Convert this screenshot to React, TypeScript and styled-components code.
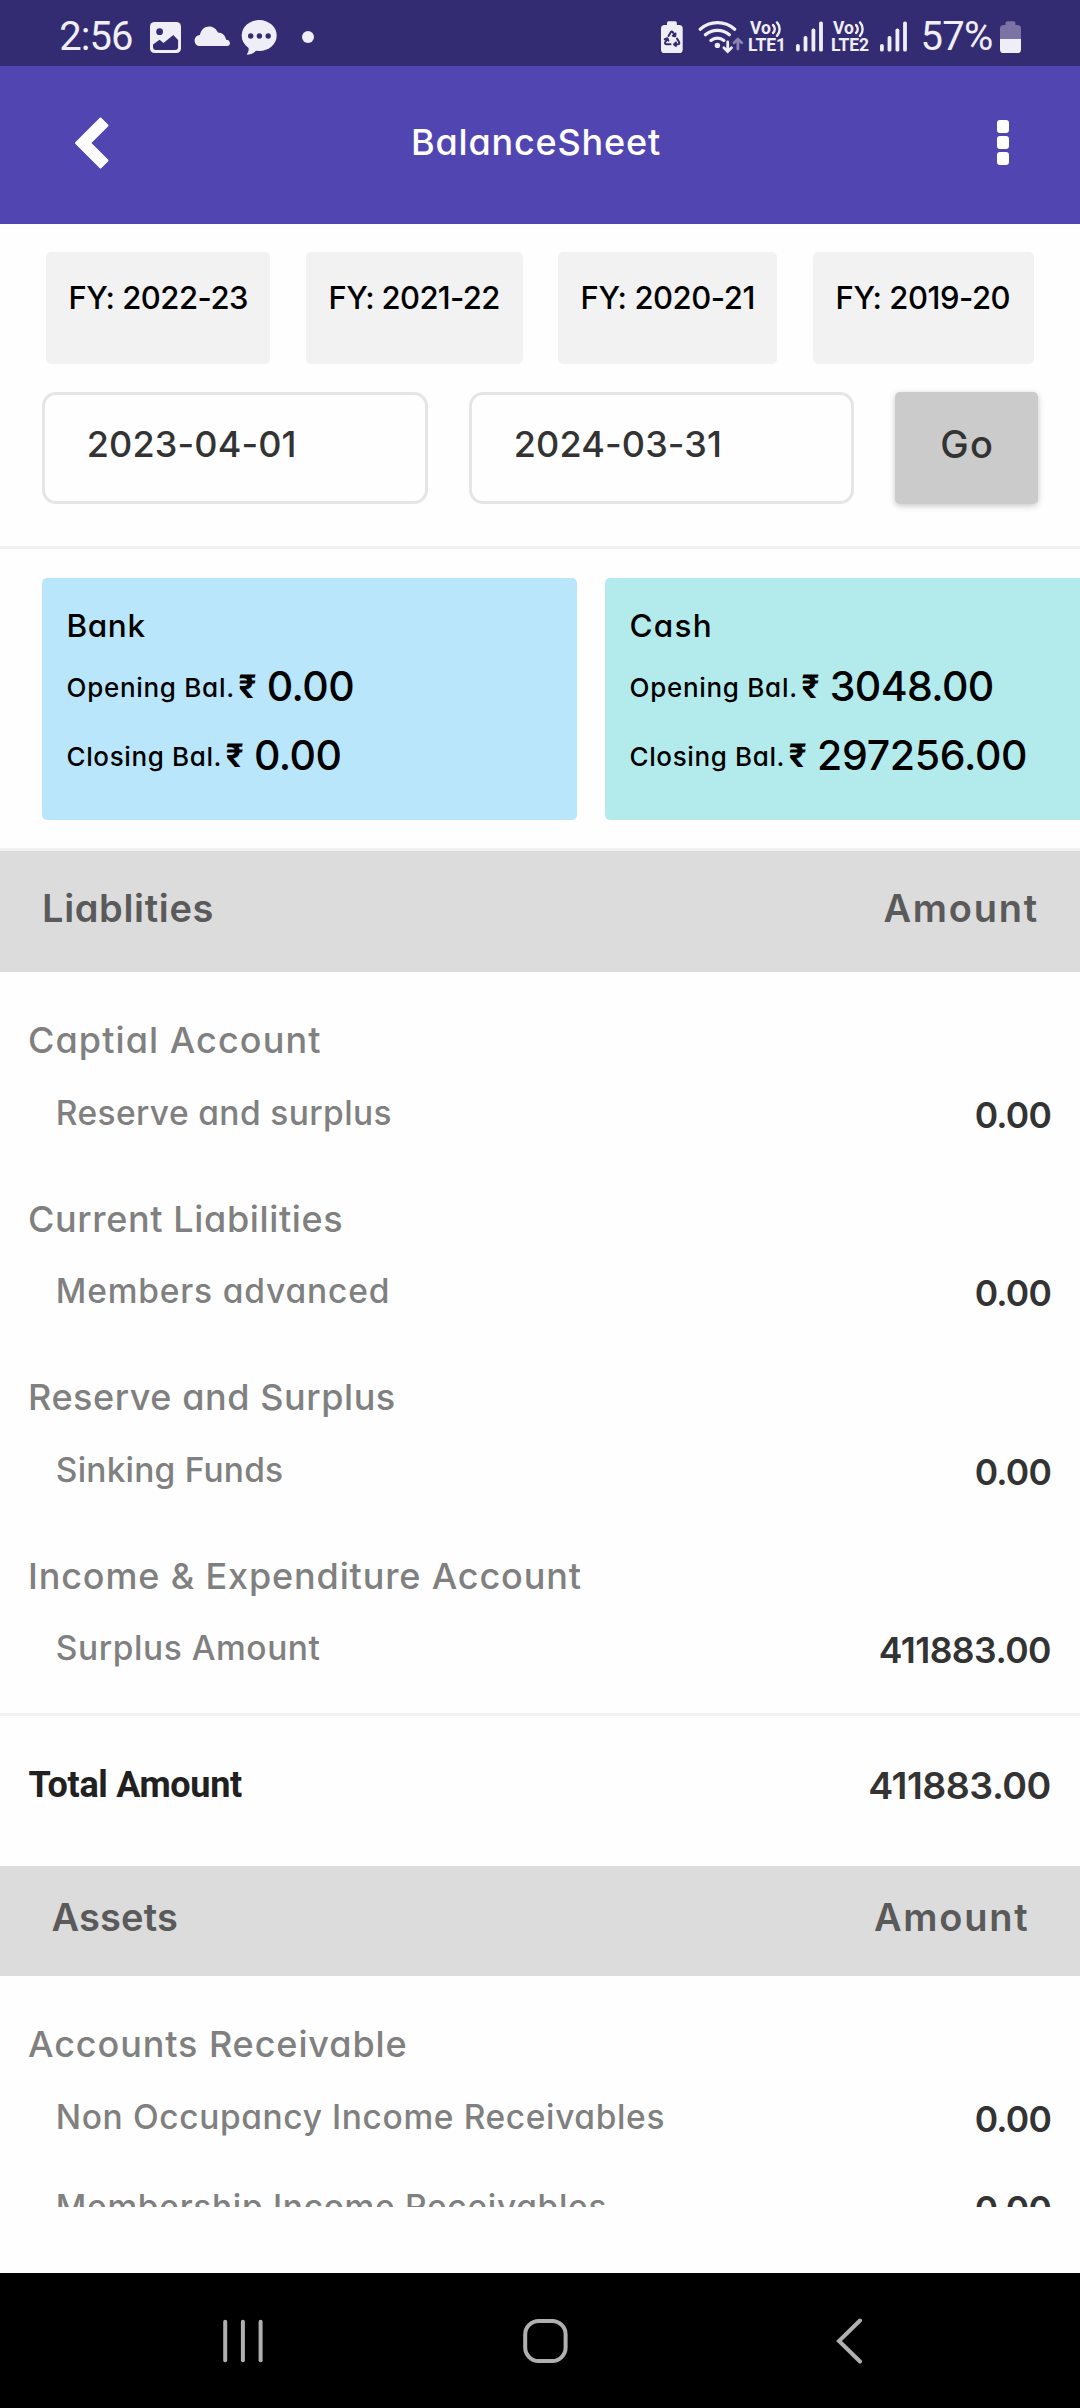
import React from "react";
import styled, { createGlobalStyle } from "styled-components";

const GlobalStyle = createGlobalStyle`
  * { box-sizing: border-box; }
  body {
    margin: 0;
    background: #fefefe;
    font-family: Inter, "Noto Sans", sans-serif;
    font-feature-settings: "cv11" 1;
  }
`;

const Screen = styled.div`
  width: 1080px;
  height: 2408px;
  display: flex;
  flex-direction: column;
  overflow: hidden;
`;

interface LabelProps {
  $size: number;
  $track?: number;
  $weight?: number;
  $color?: string;
}

const Label = styled.span<LabelProps>`
  display: block;
  white-space: nowrap;
  line-height: 44px;
  font-size: ${(p) => p.$size}px;
  letter-spacing: ${(p) => p.$track ?? 0}px;
  font-weight: ${(p) => p.$weight ?? 500};
  color: ${(p) => p.$color ?? "#000"};
`;

/* ---------- status bar ---------- */

const INK = "#efeef6";
const STATUS_BG = "#342c72";

const StatusBar = styled.div`
  flex: none;
  height: 66px;
  display: flex;
  justify-content: space-between;
  padding: 0 59px 0 59.3px;
  background: ${STATUS_BG};
  color: ${INK};
  font-family: Roboto, sans-serif;
`;

const StatusGroup = styled.div`
  display: flex;
`;

const StatusText = styled.span<{ $track: number; $width: number; $ml?: number }>`
  width: ${(p) => p.$width}px;
  margin-left: ${(p) => p.$ml ?? 0}px;
  white-space: nowrap;
  font-size: 40px;
  line-height: 74px;
  height: 66px;
  letter-spacing: ${(p) => p.$track}px;
`;

const Glyph = styled.svg<{ $ml?: number }>`
  display: block;
  flex: none;
  margin-left: ${(p) => p.$ml ?? 0}px;
`;

const Volte = styled.div<{ $ml: number; $w: number }>`
  width: ${(p) => p.$w}px;
  margin-left: ${(p) => p.$ml}px;
  padding-top: 20px;
  font-size: 17.5px;
  font-weight: 700;
  line-height: 17px;
  letter-spacing: -0.1px;
  white-space: nowrap;
`;

const VolteTop = styled.div`
  display: flex;
  padding-left: 2px;
  height: 17px;
`;

const VolteMark = ({ ml, w, slot }: { ml: number; w: number; slot: number }) => (
  <Volte $ml={ml} $w={w}>
    <VolteTop>
      Vo
      <Glyph $ml={0.5} width="12" height="17" viewBox="0 0 12 17" fill="none" stroke={INK} strokeWidth="2.4" strokeLinecap="round">
        <path d="M2 5a5.4 5.4 0 0 1 0 8" />
        <path d="M6 2.400a10 10 0 0 1 0 13.500" />
      </Glyph>
    </VolteTop>
    <div>LTE{slot}</div>
  </Volte>
);

const Signal = ({ ml }: { ml: number }) => (
  <Glyph $ml={ml} width="27" height="66" viewBox="0 0 27 66" fill={INK}>
    <rect x="0" y="44" width="3.8" height="7.6" rx="1.9" />
    <rect x="7.6" y="36" width="3.8" height="15.6" rx="1.7" />
    <rect x="15.5" y="28.6" width="3.8" height="23" rx="1.7" />
    <rect x="23.1" y="21.6" width="3.8" height="30" rx="1.7" />
  </Glyph>
);

const PictureIcon = () => (
  <Glyph $ml={17.7} width="31" height="66" viewBox="150 0 31 66">
    <rect x="150" y="22" width="31" height="31" rx="4.6" fill={INK} />
    <circle cx="159.6" cy="31.7" r="3.4" fill={STATUS_BG} />
    <path
      d="M153 44.5l6.6-4.8 3.9 3.2 9.8-7.8 4.8 4.9v7a3 3 0 0 1-3 3H156a3 3 0 0 1-3-3z"
      fill={STATUS_BG}
    />
  </Glyph>
);

const CloudIcon = () => (
  <Glyph $ml={13} width="36" height="66" viewBox="194 0 36 66" fill={INK}>
    <path d="M199.6 46a5 5 0 0 1-5-5.200c0-3.200 2.300-5.500 5.300-5.700C200.900 29.800 204.600 26.400 209.200 26.400c4 0 7.200 2.400 8.700 6.200 4.400.2 7.400 3 8.200 7.100 2.300.2 3.900 1.600 3.900 3.500 0 1.600-1.200 2.800-2.900 2.800z" />
  </Glyph>
);

const ChatIcon = () => (
  <Glyph $ml={11} width="36" height="66" viewBox="241 0 36 66">
    <ellipse cx="259.2" cy="35.5" rx="17.5" ry="15.5" fill={INK} />
    <path d="M248.5 46c1.2 3 .8 5.5-1.1 8.2 4-.3 7.5-2 9.6-5z" fill={INK} stroke={INK} strokeLinejoin="round" />
    <g fill={STATUS_BG}>
      <circle cx="250.7" cy="36" r="2.7" />
      <circle cx="259.4" cy="36" r="2.7" />
      <circle cx="268.2" cy="36" r="2.7" />
    </g>
  </Glyph>
);

const RecycleBattery = () => (
  <Glyph width="22" height="66" viewBox="661 0 22 66">
    <rect x="667" y="21.3" width="9.8" height="6" rx="1.5" fill={INK} />
    <rect x="661" y="25" width="21.7" height="28" rx="3.6" fill={INK} />
    <g fill="none" stroke={STATUS_BG} strokeWidth="2" strokeLinecap="round" strokeLinejoin="round">
      <path d="M668.5 36l2.300-3.800q1-1.400 2 0l2.300 3.800M675.5 33.500l-.3 2.700-2.500-.5" />
      <path d="M677 38.500l2.200 3.800q.6 2-1.300 2h-3.700M676 42.400l-2 2 2 1.500" />
      <path d="M670.5 44.300h-4q-2-.1-1.300-2l2.200-3.800M664.800 39.300l2.600-1 1 2.400" />
    </g>
  </Glyph>
);

const WifiIcon = () => (
  <Glyph $ml={15.5} width="46" height="66" viewBox="698.3 0 46 66" fill="none" strokeLinecap="round" strokeWidth="3.2">
    <g stroke={INK}>
      <path d="M700.5 29.200a26 26 0 0 1 34.500 0" />
      <path d="M705.7 34.800a18.500 18.500 0 0 1 24 0" />
      <path d="M711.2 40.400a10.300 10.300 0 0 1 13 0" />
      <path d="M728 42v8.500M724.200 47.800l3.800 3.700 3.800-3.700" strokeWidth="2.8" />
    </g>
    <circle cx="717.7" cy="45.4" r="2.7" fill={INK} />
    <path d="M738.2 49v-9M734.4 42.800l3.800-3.700 3.800 3.700" stroke="#8a83b2" strokeWidth="2.8" />
  </Glyph>
);

const BatteryLevel = () => (
  <Glyph width="21" height="66" viewBox="0 0 21 66">
    <path d="M5.5 25v-1.700a2 2 0 0 1 2-2h6a2 2 0 0 1 2 2V25h1.900a3.600 3.600 0 0 1 3.600 3.600V39H0V28.600A3.600 3.600 0 0 1 3.600 25z" fill="#7b73a4" />
    <path d="M0 39h21v10.400a3.600 3.600 0 0 1-3.600 3.600H3.600A3.600 3.600 0 0 1 0 49.400z" fill={INK} />
  </Glyph>
);

/* ---------- app bar ---------- */

const AppBar = styled.header`
  flex: none;
  height: 158px;
  display: flex;
  align-items: center;
  background: #5145b1;
`;

const BackButton = styled.div`
  width: 411px;
  padding: 0 0 4px 73.5px;
`;

const Title = styled.div`
  width: 586px;
  padding-bottom: 7px;
`;

const Dots = styled.div`
  display: flex;
  flex-direction: column;
  gap: 3.5px;
  padding-bottom: 5px;
`;

const Dot = styled.i`
  width: 12px;
  height: 12.6px;
  border-radius: 3px;
  background: #fff;
`;

/* ---------- filters ---------- */

const Years = styled.div`
  flex: none;
  display: flex;
  padding: 28px 0 28px 46px;
`;

const YearChip = styled.div<{ $w: number; $gap: number }>`
  width: ${(p) => p.$w}px;
  height: 112px;
  margin-right: ${(p) => p.$gap}px;
  padding: 24px 0 0 22.6px;
  border-radius: 5px;
  background: #f2f2f2;
`;

const Range = styled.div`
  flex: none;
  display: flex;
  gap: 41px;
  height: 154px;
  padding-left: 42px;
`;

const DateField = styled.div<{ $w: number }>`
  width: ${(p) => p.$w}px;
  height: 112px;
  padding: 27px 0 0 41.7px;
  border: 3px solid #e5e5e5;
  border-radius: 14px;
`;

const GoButton = styled.div`
  width: 143px;
  height: 112px;
  padding: 30px 0 0 45.2px;
  border-radius: 5px;
  background: #cbcbcb;
  box-shadow: 0 2px 6px rgba(0, 0, 0, 0.22);
`;

const Rule = styled.div`
  flex: none;
  height: 3px;
  background: #f2f2f2;
`;

/* ---------- balance cards ---------- */

const Cards = styled.div`
  flex: none;
  display: flex;
  gap: 28px;
  padding: 29px 0 28px 42px;
  overflow: hidden;
`;

const Card = styled.div<{ $bg: string }>`
  flex: none;
  width: 535px;
  height: 242px;
  padding: 24px 0 0 24.5px;
  border-radius: 5px;
  background: ${(p) => p.$bg};
`;

const CardTitle = styled.div`
  height: 49px;
  padding-top: 2px;
`;

const BalanceLine = styled.div`
  display: flex;
  align-items: center;
  height: 69px;
`;

const Caption = styled.div`
  padding-top: 4px;
`;

const Rupee = styled.span`
  width: 32px;
  padding: 2px 0 0 4px;
  font: 700 33px/44px Roboto, sans-serif;
`;

/* ---------- ledger ---------- */

const Band = styled.div<{ $h: number; $inset: number }>`
  flex: none;
  display: flex;
  align-items: center;
  justify-content: space-between;
  height: ${(p) => p.$h}px;
  padding: 0 ${(p) => p.$inset - 1}px 8px ${(p) => p.$inset}px;
  background: #dcdcdc;
`;

const Ledger = styled.section<{ $h: number }>`
  flex: none;
  height: ${(p) => p.$h}px;
  padding-top: 41px;
  overflow: hidden;
`;

const Group = styled.div`
  margin-bottom: 34.1px;
`;

const GroupTitle = styled.div`
  height: 54.5px;
  padding: 5px 0 0 28px;
`;

const Item = styled.div`
  display: flex;
  align-items: center;
  justify-content: space-between;
  height: 90px;
  padding: 0 29px 0 55.8px;
`;

const ItemAmount = styled.div`
  padding-top: 6px;
`;

const TotalRow = styled.div`
  flex: none;
  display: flex;
  align-items: center;
  justify-content: space-between;
  height: 150px;
  padding: 0 29.2px 10px 28.6px;
`;

const TotalName = styled.div`
  padding-bottom: 3px;
  font-family: Roboto, sans-serif;
`;

/* ---------- navigation bar ---------- */

const NavBar = styled.nav`
  flex: none;
  display: flex;
  align-items: center;
  height: 135px;
  margin-top: auto;
  background: #000;
`;

interface Entry {
  name: string;
  track: number;
  amount: string;
  amountTrack: number;
}
interface Section {
  title: string;
  track: number;
  items: Entry[];
}

const liabilities: Section[] = [
  { title: "Captial Account", track: 1.08, items: [{ name: "Reserve and surplus", track: 0.39, amount: "0.00", amountTrack: -0.83 }] },
  { title: "Current Liabilities", track: 0.63, items: [{ name: "Members advanced", track: 0.83, amount: "0.00", amountTrack: -0.83 }] },
  { title: "Reserve and Surplus", track: 0.56, items: [{ name: "Sinking Funds", track: 0.2, amount: "0.00", amountTrack: -0.83 }] },
  { title: "Income & Expenditure Account", track: 0.85, items: [{ name: "Surplus Amount", track: 0.56, amount: "411883.00", amountTrack: -0.52 }] },
];

const assets: Section[] = [
  {
    title: "Accounts Receivable",
    track: 0.9,
    items: [
      { name: "Non Occupancy Income Receivables", track: 0.62, amount: "0.00", amountTrack: -0.83 },
      { name: "Membership Income Receivables", track: 0.69, amount: "0.00", amountTrack: -0.83 },
    ],
  },
];

const years = [
  { text: "FY: 2022-23", w: 224, gap: 36, track: -0.5 },
  { text: "FY: 2021-22", w: 217, gap: 35, track: -0.65 },
  { text: "FY: 2020-21", w: 219, gap: 36, track: -0.45 },
  { text: "FY: 2019-20", w: 221, gap: 0, track: -0.46 },
];

const cards = [
  { name: "Bank", track: 0.6, bg: "#b9e6fb", opening: "0.00", openTrack: -0.59, closing: "0.00", closeTrack: -0.59 },
  { name: "Cash", track: 1.25, bg: "#b3ebed", opening: "3048.00", openTrack: -0.63, closing: "297256.00", closeTrack: -0.33 },
];

const Sections = ({ data }: { data: Section[] }) => (
  <>
    {data.map((s) => (
      <Group key={s.title}>
        <GroupTitle>
          <Label $size={36} $track={s.track} $color="#808080">{s.title}</Label>
        </GroupTitle>
        {s.items.map((e) => (
          <Item key={e.name}>
            <Label $size={33.5} $track={e.track} $color="#808080">{e.name}</Label>
            <ItemAmount>
              <Label $size={35.5} $track={e.amountTrack} $weight={600} $color="#333">{e.amount}</Label>
            </ItemAmount>
          </Item>
        ))}
      </Group>
    ))}
  </>
);

export default function App() {
  return (
    <Screen>
      <GlobalStyle />
      <StatusBar>
        <StatusGroup>
          <StatusText $track={-1} $width={73}>2:56</StatusText>
          <PictureIcon />
          <CloudIcon />
          <ChatIcon />
          <Glyph $ml={25} width="12" height="66" viewBox="0 0 12 66">
            <circle cx="6" cy="37" r="6" fill={INK} />
          </Glyph>
        </StatusGroup>
        <StatusGroup>
          <RecycleBattery />
          <WifiIcon />
          <VolteMark ml={4} w={38} slot={1} />
          <Signal ml={10} />
          <VolteMark ml={8} w={39} slot={2} />
          <Signal ml={10} />
          <StatusText $track={-0.8} $width={79.4} $ml={13.6}>57%</StatusText>
          <BatteryLevel />
        </StatusGroup>
      </StatusBar>

      <AppBar>
        <BackButton>
          <Glyph width="36" height="54" viewBox="0 0 36 54">
            <path d="M2 27L26.500 2.500 33.500 9.500 16 27 33.500 44.500 26.500 51.500z" fill="#fff" stroke="#fff" strokeWidth="2" strokeLinejoin="round" />
          </Glyph>
        </BackButton>
        <Title>
          <Label $size={36} $track={0.82} $color="#fff">BalanceSheet</Label>
        </Title>
        <Dots>
          <Dot />
          <Dot />
          <Dot />
        </Dots>
      </AppBar>

      <Years>
        {years.map((y) => (
          <YearChip key={y.text} $w={y.w} $gap={y.gap}>
            <Label $size={31} $track={y.track}>{y.text}</Label>
          </YearChip>
        ))}
      </Years>
      <Range>
        <DateField $w={386}>
          <Label $size={36} $track={0.15} $color="#333">2023-04-01</Label>
        </DateField>
        <DateField $w={385}>
          <Label $size={36} $track={0.15} $color="#333">2024-03-31</Label>
        </DateField>
        <GoButton>
          <Label $size={38} $track={1.5} $color="#333">Go</Label>
        </GoButton>
      </Range>
      <Rule />

      <Cards>
        {cards.map((c) => (
          <Card key={c.name} $bg={c.bg}>
            <CardTitle>
              <Label $size={31.5} $track={c.track}>{c.name}</Label>
            </CardTitle>
            <BalanceLine>
              <Caption><Label $size={26} $track={0.71}>Opening Bal.</Label></Caption>
              <Rupee>₹</Rupee>
              <Label $size={41} $track={c.openTrack}>{c.opening}</Label>
            </BalanceLine>
            <BalanceLine>
              <Caption><Label $size={26} $track={0.62}>Closing Bal.</Label></Caption>
              <Rupee>₹</Rupee>
              <Label $size={41} $track={c.closeTrack}>{c.closing}</Label>
            </BalanceLine>
          </Card>
        ))}
      </Cards>
      <Rule />

      <Band $h={121} $inset={42}>
        <Label $size={38} $track={0.66} $weight={600} $color="#5a5a5a">Liablities</Label>
        <Label $size={38} $track={1.77} $weight={600} $color="#5a5a5a">Amount</Label>
      </Band>
      <Ledger $h={741}>
        <Sections data={liabilities} />
      </Ledger>
      <Rule />
      <TotalRow>
        <TotalName>
          <Label $size={36} $track={-0.32} $weight={700} $color="#212121">Total Amount</Label>
        </TotalName>
        <Label $size={37.5} $track={-0.49} $weight={600} $color="#333">411883.00</Label>
      </TotalRow>
      <Band $h={110} $inset={51.5}>
        <Label $size={38} $track={0.15} $weight={600} $color="#5a5a5a">Assets</Label>
        <Label $size={38} $track={1.77} $weight={600} $color="#5a5a5a">Amount</Label>
      </Band>
      <Ledger $h={231}>
        <Sections data={assets} />
      </Ledger>

      <NavBar>
        <Glyph $ml={222} width="42" height="44" viewBox="0 0 42 44" fill="#b0b0b0">
          <rect x="1.2" y="0.8" width="4" height="42.4" rx="2" />
          <rect x="18.9" y="0.8" width="4" height="42.4" rx="2" />
          <rect x="36.6" y="0.8" width="4" height="42.4" rx="2" />
        </Glyph>
        <Glyph $ml={258.5} width="45" height="44" viewBox="0 0 45 44">
          <rect x="2.2" y="2" width="40.4" height="40" rx="13.5" fill="none" stroke="#b0b0b0" strokeWidth="4" />
        </Glyph>
        <Glyph $ml={266} width="28" height="46" viewBox="0 0 28 46">
          <path d="M26 2.500L5 23l21 20.500" fill="none" stroke="#b0b0b0" strokeWidth="4" strokeLinecap="round" />
        </Glyph>
      </NavBar>
    </Screen>
  );
}
